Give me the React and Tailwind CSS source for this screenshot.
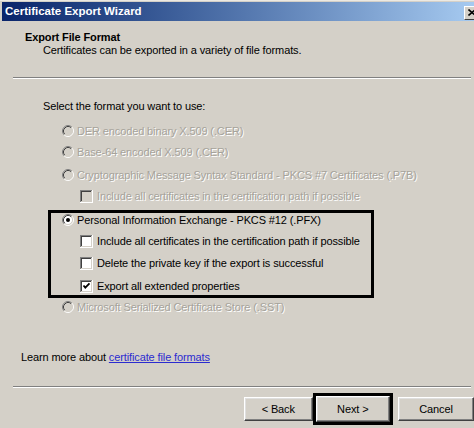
import React from 'react';

const FONT = { fontFamily: '"Liberation Sans", Arial, sans-serif' };

function Radio({ checked, disabled }) {
  return (
    <svg width="12" height="12" viewBox="0 0 12 12" className="shrink-0">
      <circle cx="6" cy="6" r="4.5" fill={disabled ? '#d4d0c8' : '#ffffff'} />
      <path d="M2.11 9.89 A5.5 5.5 0 0 1 9.89 2.11" stroke="#808080" fill="none" />
      <path d="M9.89 2.11 A5.5 5.5 0 0 1 2.11 9.89" stroke="#ffffff" fill="none" />
      <path d="M2.82 9.18 A4.5 4.5 0 0 1 9.18 2.82" stroke="#404040" fill="none" />
      <path d="M9.18 2.82 A4.5 4.5 0 0 1 2.82 9.18" stroke="#d4d0c8" fill="none" />
      {checked && <circle cx="6" cy="6" r="2" fill="#000" />}
    </svg>
  );
}

function Checkbox({ checked, disabled }) {
  return (
    <svg width="13" height="13" viewBox="0 0 13 13" className="shrink-0">
      <rect x="0" y="0" width="13" height="13" fill="#ffffff" />
      <rect x="1" y="1" width="11" height="11" fill="#d4d0c8" />
      <rect x="0" y="0" width="12" height="1" fill="#808080" />
      <rect x="0" y="0" width="1" height="12" fill="#808080" />
      <rect x="1" y="1" width="10" height="1" fill="#404040" />
      <rect x="1" y="1" width="1" height="10" fill="#404040" />
      <rect x="2" y="2" width="9" height="9" fill={disabled ? '#d4d0c8' : '#ffffff'} />
      {checked && (
        <path d="M3.5 5.5 L5.3 7.6 L9.5 3.4" stroke="#000" strokeWidth="1.8" fill="none" />
      )}
    </svg>
  );
}

function Label({ children, disabled }) {
  return (
    <span
      className={
        disabled
          ? 'text-[#a6a39b] [text-shadow:1px_1px_0_#ffffff] whitespace-nowrap'
          : 'text-black whitespace-nowrap'
      }
    >
      {children}
    </span>
  );
}

function RadioRow({ label, checked, disabled, className = '' }) {
  return (
    <div className={'flex items-center h-[14px] gap-[3px] ' + className}>
      <Radio checked={checked} disabled={disabled} />
      <Label disabled={disabled}>{label}</Label>
    </div>
  );
}

function CheckRow({ label, checked, disabled, className = '' }) {
  return (
    <div className={'flex items-center h-[14px] gap-[4px] ml-[18px] ' + className}>
      <Checkbox checked={checked} disabled={disabled} />
      <Label disabled={disabled}>{label}</Label>
    </div>
  );
}

function Button({ children, className = '' }) {
  return (
    <button
      className={
        'h-[24px] bg-[#d4d0c8] text-black border border-t-white border-l-white border-r-[#404040] border-b-[#404040] shadow-[inset_-1px_-1px_0_#808080,inset_1px_1px_0_#dfdfdf] ' +
        className
      }
    >
      {children}
    </button>
  );
}

function Separator({ className = '' }) {
  return <div className={'h-[2px] border-t border-t-[#808080] border-b border-b-white ' + className} />;
}

export default function App() {
  return (
    <div
      className="w-[474px] h-[428px] bg-[#d4d0c8] pt-[2px] pl-[2px] overflow-hidden flex flex-col text-[11px] leading-[13px] tracking-[-0.12px] border-t border-t-[#ece9e2]"
      style={FONT}
    >
      {/* title bar */}
      <div className="h-[19px] -mt-px shrink-0 flex items-center bg-gradient-to-r from-[#0a246a] to-[#a6caf0] pl-[3px]">
        <span className="text-white font-bold text-[11.5px] tracking-normal">Certificate Export Wizard</span>
        <div className="ml-auto mr-[-6px] mt-[2px] w-[16px] h-[14px] bg-[#d4d0c8] border border-t-white border-l-white border-r-[#404040] border-b-[#404040] flex items-center justify-center">
          <svg width="8" height="7" viewBox="0 0 8 7">
            <path d="M0.5 0.5 L7.5 6.5 M7.5 0.5 L0.5 6.5" stroke="#000" strokeWidth="1.6" />
          </svg>
        </div>
      </div>

      {/* header */}
      <div className="pl-[23px] pt-[10px]">
        <div className="font-bold text-black">Export File Format</div>
        <div className="ml-[18px] text-black">Certificates can be exported in a variety of file formats.</div>
      </div>

      <Separator className="mt-[20px] ml-[11px] w-[458px]" />

      <div className="pl-[41px] mt-[20px] h-[14px] flex items-center text-black">Select the format you want to use:</div>

      {/* options */}
      <div className="pl-[60px] flex flex-col">
        <RadioRow className="mt-[11px]" disabled label="DER encoded binary X.509 (.CER)" />
        <RadioRow className="mt-[7px]" disabled label="Base-64 encoded X.509 (.CER)" />
        <RadioRow className="mt-[9px]" disabled label="Cryptographic Message Syntax Standard - PKCS #7 Certificates (.P7B)" />
        <CheckRow className="mt-[7px]" disabled label="Include all certificates in the certification path if possible" />

        <div className="mt-[7px] ml-[-14px] w-[326px] border-[3px] border-black pl-[11px] pb-[2px] flex flex-col">
          <RadioRow checked label="Personal Information Exchange - PKCS #12 (.PFX)" />
          <CheckRow className="mt-[7px]" label="Include all certificates in the certification path if possible" />
          <CheckRow className="mt-[8px]" label="Delete the private key if the export is successful" />
          <CheckRow className="mt-[9px]" checked label="Export all extended properties" />
        </div>

        <RadioRow className="mt-[2px]" disabled label="Microsoft Serialized Certificate Store (.SST)" />
      </div>

      <div className="pl-[19px] mt-[36px] h-[14px] flex items-center text-black whitespace-nowrap">
        Learn more about&nbsp;
        <span className="text-[#2b2bd0] underline">certificate file formats</span>
      </div>

      <Separator className="mt-[22px] ml-[11px] w-[458px]" />

      {/* buttons */}
      <div className="mt-[5px] ml-[242px] flex items-center">
        <Button className="w-[69px]">&lt; Back</Button>
        <div className="w-[81px] h-[32px] border-[3px] border-black flex">
          <Button className="w-full h-full border-black">Next &gt;</Button>
        </div>
        <Button className="w-[76px] ml-[5px] shrink-0">Cancel</Button>
      </div>
    </div>
  );
}
